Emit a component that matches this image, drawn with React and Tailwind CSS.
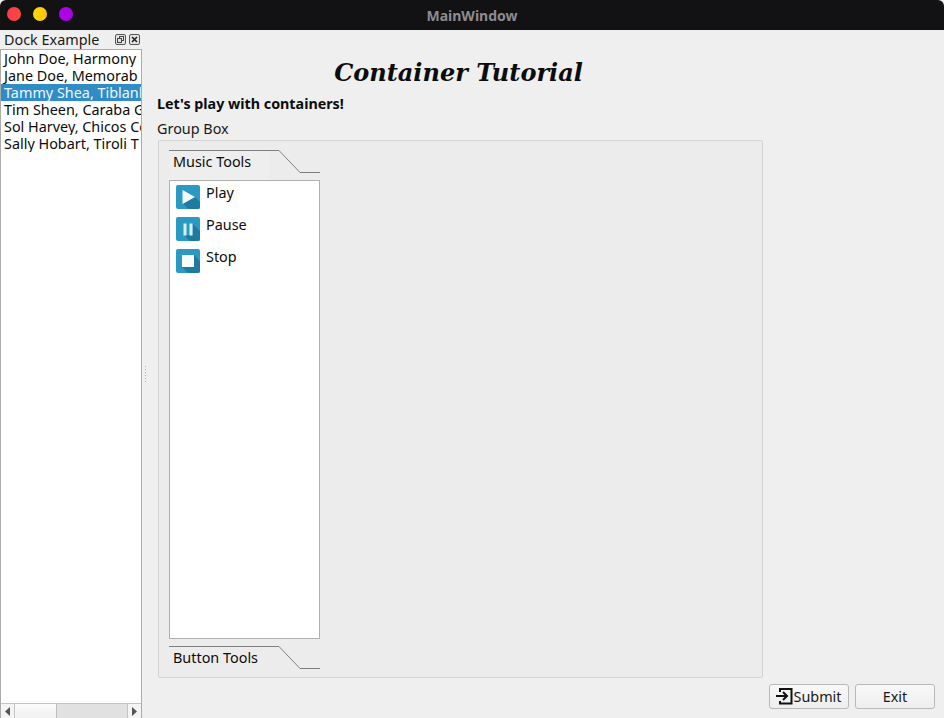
import React from "react";

const FONT = "font-['Noto_Sans','Open_Sans',sans-serif]";
const people = [
  "John Doe, Harmony",
  "Jane Doe, Memorab",
  "Tammy Shea, Tiblank",
  "Tim Sheen, Caraba G",
  "Sol Harvey, Chicos Co",
  "Sally Hobart, Tiroli T",
];

function ToolIcon({ kind }) {
  return (
    <svg width="24" height="24" viewBox="0 0 24 24" className="shrink-0">
      <rect width="24" height="24" rx="2" fill="#2a9ac2" />
      {kind === "play" && <path d="M7 18.5 L12.5 24 L22 24 Q24 24 24 22 L24 17 L19 12 Z" fill="#1f7a9e" />}
      {kind === "pause" && <path d="M8 18 L14 24 L22 24 Q24 24 24 22 L24 14 L17 7 L17 18 Z" fill="#1f7a9e" />}
      {kind === "stop" && <path d="M6 18 L12 24 L22 24 Q24 24 24 22 L24 12 L18 6 L18 18 Z" fill="#1f7a9e" />}
      {kind === "play" && <path d="M6.5 5 L19 12 L6.5 19 Z" fill="#f4f8fa" />}
      {kind === "pause" && (
        <g fill="#d9edf4">
          <rect x="7.5" y="6.5" width="3" height="12" />
          <rect x="13.5" y="6.5" width="3" height="12" />
        </g>
      )}
      {kind === "stop" && <rect x="6" y="6" width="12" height="12" fill="#f8fafb" />}
    </svg>
  );
}

function TabHeader({ label, className, active }) {
  return (
    <div className={`relative h-[23px] w-[151px] ${className}`}>
      {active && <div className="absolute left-0 top-0 h-[30px] w-[100px] bg-[#eeeeee]" />}
      <svg width="151" height="23" viewBox="0 0 151 23" className="absolute left-0 top-0">
        <path d="M0 0.5 H110 L131 22.5 H151" fill="none" stroke="#7f7f7f" strokeWidth="1" />
      </svg>
      <span className="absolute left-1 top-[1px] text-[14.4px] leading-[22px] text-[#0c0c0c] whitespace-nowrap">{label}</span>
    </div>
  );
}

function Tool({ kind, label }) {
  return (
    <div className="flex h-[32px] gap-[6px] pl-[6px] pt-[4px] text-[14.4px] leading-[16px] text-[#0c0c0c]">
      <ToolIcon kind={kind} />
      <span>{label}</span>
    </div>
  );
}

export default function App() {
  return (
    <div className={`flex h-[718px] w-[944px] flex-col overflow-hidden bg-[#efefef] ${FONT}`}>
      <header className="relative flex h-[30px] shrink-0 items-center justify-center rounded-t-[6px] bg-[#121214]">
        <div className="absolute left-[7px] top-[7px] flex gap-[12px]">
          <span className="h-[14px] w-[14px] rounded-full bg-gradient-to-r from-[#fb3a4e] to-[#fb4a3a]" />
          <span className="h-[14px] w-[14px] rounded-full bg-gradient-to-r from-[#fdd80a] to-[#fcc40c]" />
          <span className="h-[14px] w-[14px] rounded-full bg-gradient-to-r from-[#b203ea] to-[#a603e0]" />
        </div>
        <span className="text-[14px] font-bold text-[#8c8c90]">MainWindow</span>
      </header>

      <div className="flex min-h-0 flex-1">
        <aside className="flex w-[142px] shrink-0 flex-col">
          <div className="flex h-[19px] shrink-0 items-center justify-between pl-1 pr-[2px]">
            <span className="text-[14.4px] leading-[19px] text-[#1a1a1a]">Dock Example</span>
            <div className="flex gap-[3px]">
              <svg width="11" height="11" viewBox="0 0 11 11">
                <rect x="0.5" y="0.5" width="10" height="10" rx="1.5" fill="#e4e4e4" stroke="#555" />
                <rect x="4.5" y="2.5" width="4" height="4" fill="none" stroke="#444" />
                <rect x="2.5" y="4.5" width="4" height="4" fill="#e4e4e4" stroke="#444" />
              </svg>
              <svg width="11" height="11" viewBox="0 0 11 11">
                <rect x="0.5" y="0.5" width="10" height="10" rx="1.5" fill="#e4e4e4" stroke="#555" />
                <path d="M3 3 L8 8 M8 3 L3 8" stroke="#222" strokeWidth="1.6" />
              </svg>
            </div>
          </div>
          <div className="flex min-h-0 flex-1 flex-col border border-b-0 border-[#ababab] bg-white">
            <ul className="min-h-0 flex-1 overflow-hidden">
              {people.map((p, i) => (
                <li
                  key={p}
                  className={`h-[17px] overflow-hidden whitespace-nowrap pl-[3px] text-[14.4px] leading-[17px] ${
                    i === 2 ? "bg-[#308cc6] text-[#eef6fb]" : "text-[#0c0c0c]"
                  }`}
                >
                  {p}
                </li>
              ))}
            </ul>
            <div className="flex h-[15px] shrink-0 border-t border-[#c4c4c4] bg-[#f4f4f4]">
              <div className="flex w-[14px] items-center justify-center border-r border-[#c4c4c4]">
                <svg width="5" height="9" viewBox="0 0 5 9"><path d="M5 0 V9 L0 4.5 Z" fill="#555" /></svg>
              </div>
              <div className="w-[42px] border-r border-[#bdbdbd] bg-gradient-to-b from-[#fbfbfb] to-[#f0f0f0]" />
              <div className="flex-1 bg-[#e1e1e1]" />
              <div className="flex w-[14px] items-center justify-center border-l border-[#c4c4c4]">
                <svg width="5" height="9" viewBox="0 0 5 9"><path d="M0 0 V9 L5 4.5 Z" fill="#555" /></svg>
              </div>
            </div>
          </div>
        </aside>

        <div className="flex w-[16px] shrink-0 items-center justify-center">
          <div className="flex flex-col gap-[2px] pr-[9px]">
            {[0, 1, 2, 3, 4, 5].map((n) => (
              <span key={n} className="h-px w-px bg-[#b0b0b0]" />
            ))}
          </div>
        </div>

        <main className="flex min-w-0 flex-1 flex-col pr-[9px]">
          <h1 className="mt-[25px] h-[36px] w-[601px] text-center font-['DejaVu_Serif',serif] text-[24px] font-bold italic leading-[36px] text-[#0c0c0c]">
            Container Tutorial
          </h1>
          <p className="-ml-[1px] mt-[4px] h-[18px] text-[14.3px] font-bold leading-[18px] text-[#0c0c0c]">
            Let's play with containers!
          </p>
          <p className="-ml-[1px] mt-[7px] h-[18px] text-[14.4px] leading-[18px] text-[#1a1a1a]">Group Box</p>
          <section className="mt-[2px] flex h-[538px] w-[605px] flex-col rounded-[2px] border border-[#d3d3d3] bg-[#ececec] pl-[10px] pt-[9px]">
            <TabHeader label="Music Tools" active />
            <div className="relative mt-[7px] h-[459px] w-[151px] border border-[#b0b0b0] bg-white">
              <Tool kind="play" label="Play" />
              <Tool kind="pause" label="Pause" />
              <Tool kind="stop" label="Stop" />
            </div>
            <TabHeader label="Button Tools" className="mt-[7px]" />
          </section>
          <div className="mt-[6px] flex justify-end gap-[6px]">
            <button className="flex h-[25px] w-[80px] items-center justify-center rounded-[3px] border border-[#b9b9b9] bg-gradient-to-b from-[#f8f8f8] to-[#eeeeee] text-[14.4px] text-[#1a1a1a]">
              <svg width="17" height="17" viewBox="0 0 17 17" className="shrink-0">
                <path d="M4 4 V1 H15.5 V15.5 H4 V13" fill="none" stroke="#111" strokeWidth="2" />
                <path d="M0 8 H10.5 M7 4 L11 8 L7 12" fill="none" stroke="#111" strokeWidth="2" />
              </svg>
              Submit
            </button>
            <button className="flex h-[25px] w-[80px] items-center justify-center rounded-[3px] border border-[#b9b9b9] bg-gradient-to-b from-[#f8f8f8] to-[#eeeeee] text-[14.4px] text-[#1a1a1a]">
              Exit
            </button>
          </div>
        </main>
      </div>
    </div>
  );
}
